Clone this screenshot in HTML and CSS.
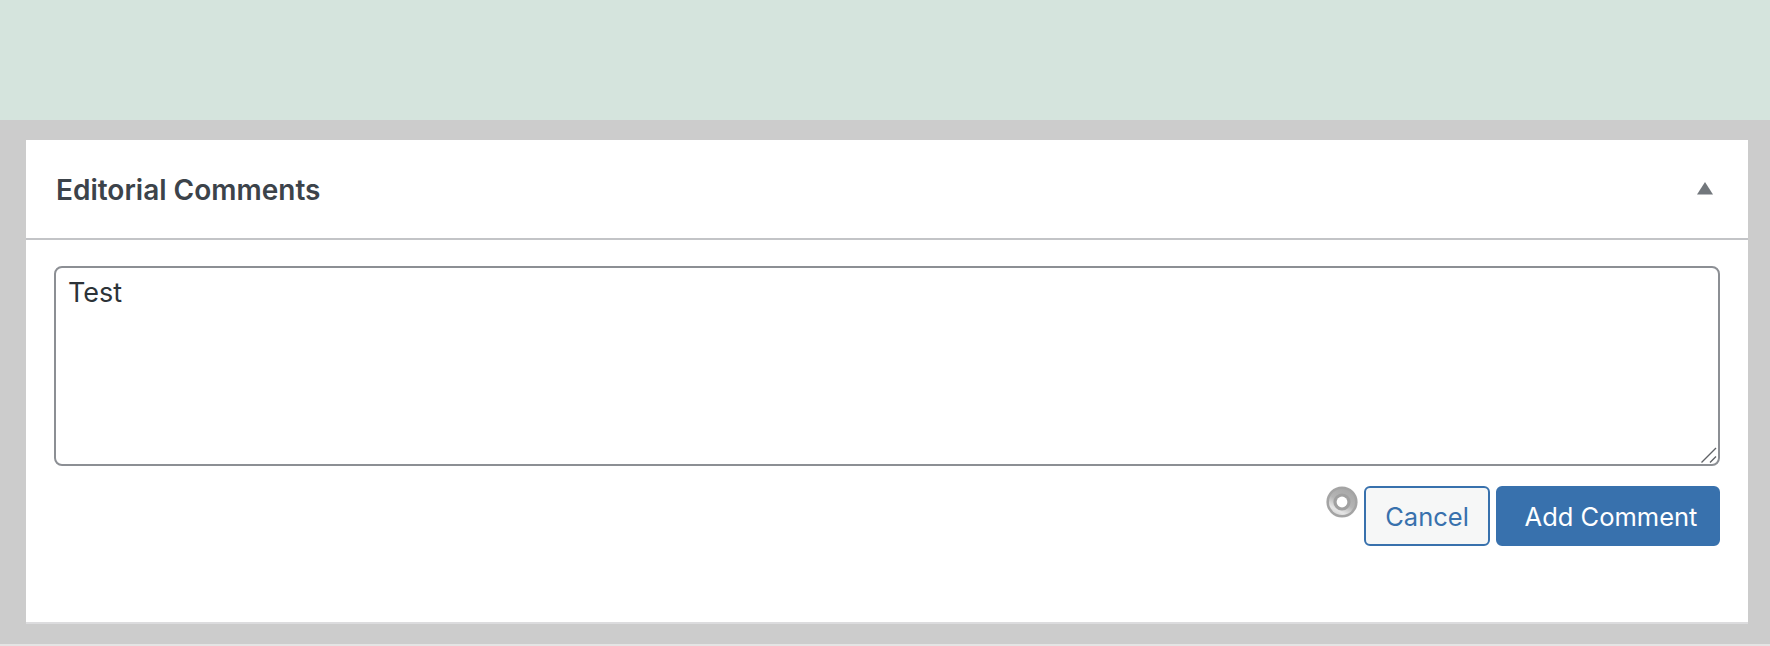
FILE: index.html
```html
<!DOCTYPE html>
<html lang="en">
<head>
<meta charset="utf-8">
<title>Editorial Comments</title>
<link rel="stylesheet" href="styles.css">
</head>
<body>
<div class="banner"></div>
<main class="backdrop">
  <section class="card">
    <header class="card-head">
      <h2 class="card-title">Editorial Comments</h2>
      <svg class="toggle" width="18" height="14" viewBox="0 0 18 14"><path d="M9 0 L17 12.6 L1 12.6 Z" fill="#72777c"/></svg>
    </header>
    <div class="card-body">
      <div class="comment-wrap">
        <textarea class="comment">Test</textarea>
        <svg class="grip" width="18" height="18" viewBox="0 0 18 18"><path d="M1.5 16.5 L16 2 M10 16.5 L16 10.5" stroke="#5f6266" stroke-width="1.4" fill="none"/></svg>
      </div>
      <div class="actions">
        <svg class="spinner" width="32" height="32" viewBox="0 0 32 32">
          <defs>
            <linearGradient id="ring" x1="0.75" y1="0.05" x2="0.25" y2="0.95">
              <stop offset="0" stop-color="#a8a8a8"/>
              <stop offset="0.5" stop-color="#b4b4b4"/>
              <stop offset="0.85" stop-color="#e6e6e6"/>
              <stop offset="1" stop-color="#d6d6d6"/>
            </linearGradient>
            <filter id="soft" x="-10%" y="-10%" width="120%" height="120%"><feGaussianBlur stdDeviation="0.7"/></filter>
          </defs>
          <g filter="url(#soft)">
            <circle cx="16" cy="16" r="15.6" fill="#a4a4a4"/>
            <circle cx="16" cy="16" r="13" fill="url(#ring)"/>
            <circle cx="16" cy="16" r="8.6" fill="#a0a0a0"/>
            <circle cx="16" cy="16" r="5.4" fill="#fff"/>
          </g>
        </svg>
        <button class="btn btn-secondary" type="button">Cancel</button>
        <button class="btn btn-primary" type="button">Add Comment</button>
      </div>
    </div>
  </section>
</main>
</body>
</html>
```
FILE: styles.css
```css
* { box-sizing: border-box; }
html, body { margin: 0; height: 646px; overflow: hidden; background: #e4e4e4; font-family: Inter, "Liberation Sans", sans-serif; }
.banner { height: 120px; background: #d5e4dd; }
.backdrop { height: 524px; background: #ccc; padding: 20px 22px 20px 26px; }
.card { height: 484px; background: #fff; border-bottom: 2px solid #dcdcde; }
.card-head { height: 100px; border-bottom: 2px solid #c3c4c7; padding: 2px 34px 0 30px; display: flex; align-items: center; justify-content: space-between; }
.card-title { margin: 0; font-size: 28px; font-weight: 600; color: #3c434a; line-height: 1; }
.toggle { display: block; margin-top: -2px; }
.card-body { padding: 26px 28px 0; }
.comment-wrap { position: relative; }
.comment { display: block; width: 100%; height: 200px; border: 2px solid #8c8f94; border-radius: 8px; padding: 9px 12px 8px; font-family: inherit; font-size: 27px; line-height: 32px; color: #2c3338; background: #fff; outline: none; margin: 0; resize: none; }
.grip { position: absolute; right: 2px; bottom: 2px; display: block; }
.actions { display: flex; justify-content: flex-end; align-items: flex-start; gap: 6px; margin-top: 20px; }
.spinner { display: block; }
.btn { height: 60px; font-family: inherit; font-size: 25.5px; border-radius: 6px; border: 2px solid #3871ad; margin: 0; cursor: pointer; }
.btn-secondary { width: 126px; padding: 0; background: #f6f7f7; color: #3871ad; }
.btn-primary { width: 224px; padding: 0 0 0 6px; background: #3871ad; color: #fff; }
```
